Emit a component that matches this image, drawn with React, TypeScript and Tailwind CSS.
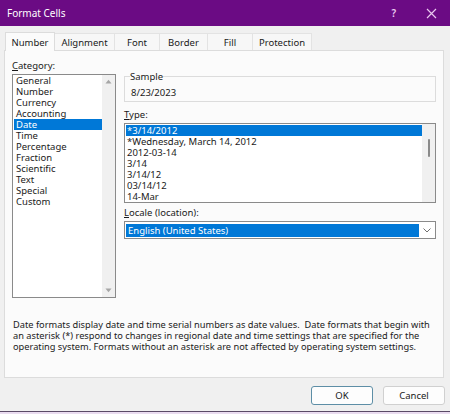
import React from "react";

const categories = [
  "General",
  "Number",
  "Currency",
  "Accounting",
  "Date",
  "Time",
  "Percentage",
  "Fraction",
  "Scientific",
  "Text",
  "Special",
  "Custom",
];

const types = [
  "*3/14/2012",
  "*Wednesday, March 14, 2012",
  "2012-03-14",
  "3/14",
  "3/14/12",
  "03/14/12",
  "14-Mar",
];

const tabs = [
  { label: "Number", w: "w-[50px]" },
  { label: "Alignment", w: "w-[60px]" },
  { label: "Font", w: "w-[45px]" },
  { label: "Border", w: "w-[48px]" },
  { label: "Fill", w: "w-[45px]" },
  { label: "Protection", w: "w-[59px]" },
];

function ArrowUp() {
  return (
    <svg width="7" height="5" viewBox="0 0 7 5">
      <path d="M0.5 4.5 L3.5 0.8 L6.5 4.5 Z" fill="#a6a6a6" />
    </svg>
  );
}

function ArrowDown() {
  return (
    <svg width="7" height="5" viewBox="0 0 7 5">
      <path d="M0.5 0.5 L3.5 4.2 L6.5 0.5 Z" fill="#a6a6a6" />
    </svg>
  );
}

export default function App() {
  return (
    <div
      className="w-[450px] h-[414px] flex flex-col bg-[#f0f0f0] text-[9.5px] leading-[11px] text-[#1a1a1a] overflow-hidden"
      style={{ fontFamily: "'Noto Sans', 'Open Sans', sans-serif" }}
    >
      {/* title bar */}
      <div className="h-[26px] shrink-0 bg-[#6b0b84] flex items-center justify-between pl-[7px] pr-[13px] text-white">
        <span className="text-[10px]">Format Cells</span>
        <div className="flex items-center gap-[30px] text-[#e9c8ef]">
          <span className="text-[10px] font-semibold">?</span>
          <svg width="11" height="11" viewBox="0 0 11 11">
            <path d="M1 1 L10 10 M10 1 L1 10" stroke="#e9c8ef" strokeWidth="1.2" />
          </svg>
        </div>
      </div>

      {/* tabs */}
      <div className="flex items-end pl-[5px] pt-[6px] h-[24px] shrink-0">
        {tabs.map((t, i) =>
          i === 0 ? (
            <div
              key={t.label}
              className={`${t.w} h-[19px] bg-[#fbfbfb] border border-b-0 border-[#dcdcdc] flex items-center justify-center relative -mb-px z-10`}
            >
              {t.label}
            </div>
          ) : (
            <div
              key={t.label}
              className={`${t.w} h-[17px] bg-[#f7f7f7] border-t border-r border-[#e3e3e3] flex items-center justify-center`}
            >
              {t.label}
            </div>
          )
        )}
      </div>

      {/* panel */}
      <div className="ml-[4px] w-[440px] h-[328px] shrink-0 bg-[#fbfbfb] border border-[#dcdcdc] flex flex-col px-[7px] pt-[9px]">
        <div className="flex gap-[8px]">
          {/* category column */}
          <div className="w-[104px] flex flex-col">
            <div className="h-[11px]">
              <span className="underline">C</span>ategory:
            </div>
            <div className="mt-[3px] h-[224px] bg-white border border-[#8a8a8a] flex">
              <div className="flex-1 pl-[1px]">
                {categories.map((c) => (
                  <div
                    key={c}
                    className={
                      c === "Date"
                        ? "h-[11px] pl-[2px] bg-[#0078d7] text-white"
                        : "h-[11px] pl-[2px]"
                    }
                  >
                    {c}
                  </div>
                ))}
              </div>
              <div className="w-[13px] bg-[#f0f0f0] flex flex-col items-center justify-between py-[4px]">
                <ArrowUp />
                <ArrowDown />
              </div>
            </div>
          </div>

          {/* right column */}
          <div className="flex-1 flex flex-col">
            <fieldset className="border border-[#dcdcdc] h-[31px] px-[5px] mt-[11px]">
              <legend className="px-0 text-[#1a1a1a]">Sample</legend>
              <div className="pt-[5px] pl-[1px]">8/23/2023</div>
            </fieldset>

            <div className="mt-[7px] h-[11px]">
              <span className="underline">T</span>ype:
            </div>
            <div className="mt-[3px] h-[80px] bg-white border border-[#8a8a8a] flex">
              <div className="flex-1 pt-[1px] pl-[1px] overflow-hidden">
                {types.map((t, i) => (
                  <div
                    key={t}
                    className={
                      i === 0
                        ? "h-[11px] pl-[1px] bg-[#0078d7] text-white"
                        : "h-[11px] pl-[1px]"
                    }
                  >
                    {t}
                  </div>
                ))}
              </div>
              <div className="w-[13px] bg-[#f0f0f0] flex justify-center pt-[15px]">
                <div className="w-[2px] h-[18px] bg-[#8a8a8a] rounded-full" />
              </div>
            </div>

            <div className="mt-[4px] h-[11px]">
              <span className="underline">L</span>ocale (location):
            </div>
            <div className="mt-[3px] h-[18px] bg-white border border-[#8a8a8a] flex items-center pl-[1px]">
              <div className="flex-1 h-[13px] bg-[#0078d7] text-white pl-[2px] flex items-center">
                English (United States)
              </div>
              <div className="w-[16px] flex items-center justify-center">
                <svg width="8" height="5" viewBox="0 0 8 5">
                  <path d="M0.5 0.5 L4 4 L7.5 0.5" stroke="#707070" fill="none" strokeWidth="1" />
                </svg>
              </div>
            </div>
          </div>
        </div>

        <div className="mt-[21px] pl-px whitespace-nowrap text-[9.25px]">
          Date formats display date and time serial numbers as date values.&nbsp; Date formats that begin with
          <br />
          an asterisk (*) respond to changes in regional date and time settings that are specified for the
          <br />
          operating system. Formats without an asterisk are not affected by operating system settings.
        </div>
      </div>

      {/* buttons */}
      <div className="flex justify-end gap-[10px] pr-[5px] pt-[8px]">
        <button className="w-[62px] h-[19px] bg-[#fdfdfd] border border-[#5d8ea6] rounded-[3px] flex items-center justify-center">
          OK
        </button>
        <button className="w-[62px] h-[19px] bg-[#fdfdfd] border border-[#d0d0d0] rounded-[3px] flex items-center justify-center">
          Cancel
        </button>
      </div>

      <div className="flex-1" />
      <div className="h-px bg-[#5a4a66] shrink-0" />
      <div className="h-[2px] bg-[#eadcf0] shrink-0" />
    </div>
  );
}
